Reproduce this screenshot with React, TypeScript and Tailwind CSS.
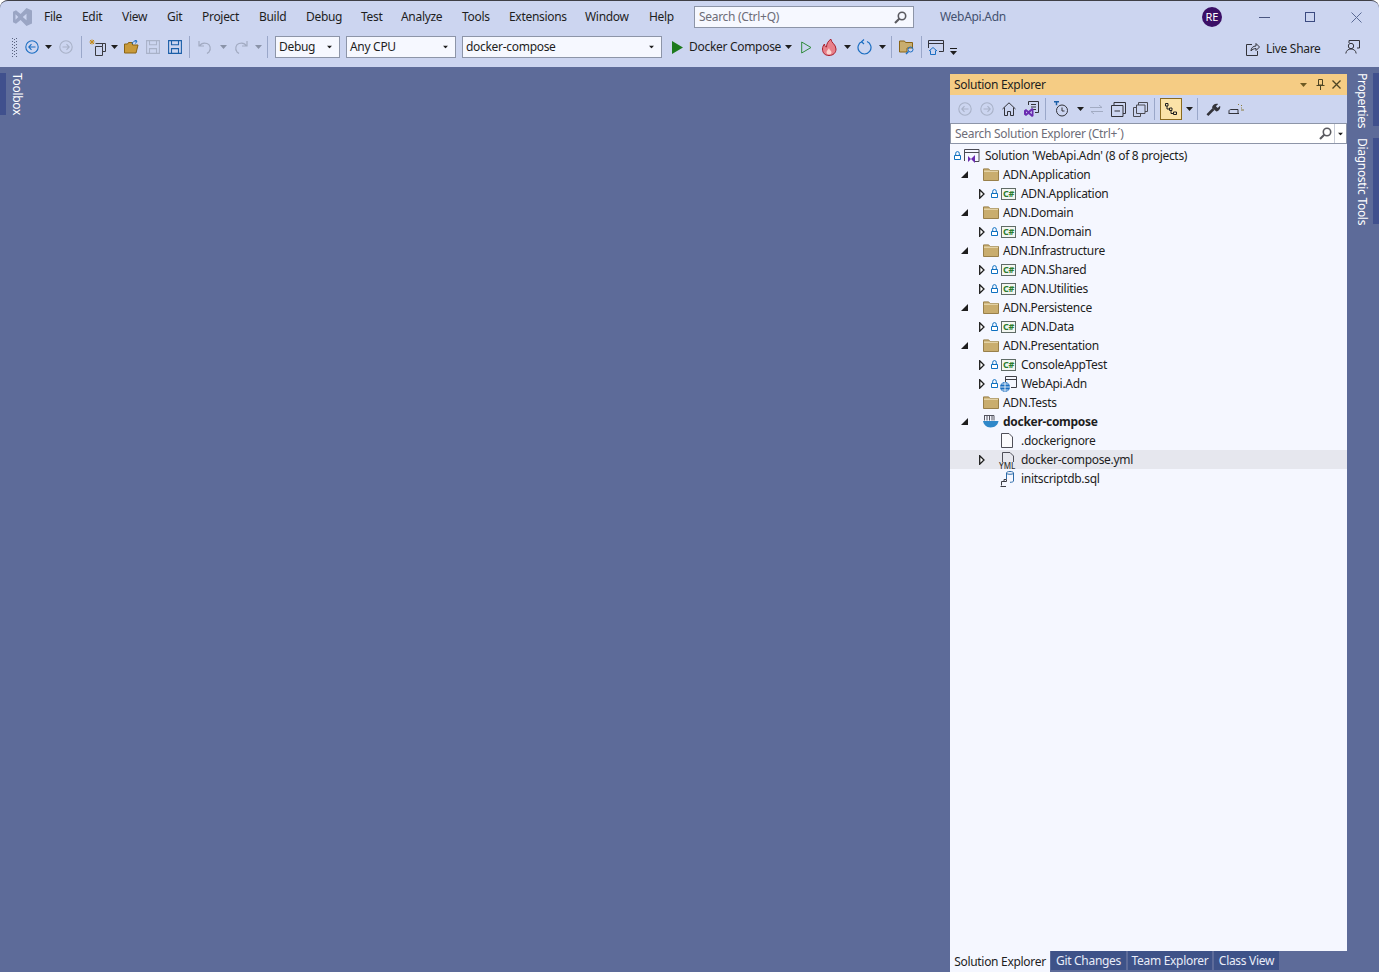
import React from 'react';

const menus = [
  { name: 'File', cls: 'w-[38px]' },
  { name: 'Edit', cls: 'w-[40px]' },
  { name: 'View', cls: 'w-[45px]' },
  { name: 'Git', cls: 'w-[35px]' },
  { name: 'Project', cls: 'w-[57px]' },
  { name: 'Build', cls: 'w-[47px]' },
  { name: 'Debug', cls: 'w-[55px]' },
  { name: 'Test', cls: 'w-[40px]' },
  { name: 'Analyze', cls: 'w-[61px]' },
  { name: 'Tools', cls: 'w-[47px]' },
  { name: 'Extensions', cls: 'w-[76px]' },
  { name: 'Window', cls: 'w-[64px]' },
  { name: 'Help', cls: 'w-[45px]' },
];

function Caret({ className = '', color = '#1e1e1e' }: { className?: string; color?: string }) {
  return (
    <svg width="7" height="4" viewBox="0 0 7 4" className={'shrink-0 ' + className}>
      <path d="M0 0h7L3.5 4z" fill={color} />
    </svg>
  );
}

function Sep({ className = '' }: { className?: string }) {
  return <div className={'w-px h-[22px] bg-[#9aa7c9] shrink-0 ' + className} />;
}

function Grip() {
  const dots = [0, 1, 2, 3, 4, 5, 6];
  return (
    <svg width="5" height="19" viewBox="0 0 5 19" className="shrink-0">
      {dots.map((d) => (
        <g key={d} fill="#59637f">
          <rect x="0" y={d * 3} width="1" height="1" />
          <rect x="2" y={d * 3 + 1} width="1" height="1" />
          <rect x="4" y={d * 3} width="1" height="1" />
        </g>
      ))}
    </svg>
  );
}

function CircleArrow({ dir, color, className = '' }: { dir: 'l' | 'r'; color: string; className?: string }) {
  return (
    <svg width="14" height="14" viewBox="0 0 14 14" fill="none" stroke={color} className={'shrink-0 ' + className}>
      <circle cx="7" cy="7" r="6.2" strokeWidth="1.1" />
      {dir === 'l' ? <path d="M10.5 7H4M6.5 4.2 3.8 7l2.7 2.8" strokeWidth="1.1" /> : <path d="M3.5 7H10M7.5 4.2 10.2 7l-2.7 2.8" strokeWidth="1.1" />}
    </svg>
  );
}

function SaveIcon({ color, className = '' }: { color: string; className?: string }) {
  return (
    <svg width="14" height="14" viewBox="0 0 14 14" fill="none" stroke={color} strokeWidth="1.1" className={'shrink-0 ' + className}>
      <path d="M.6.6h12.8v12.8H.6z" />
      <path d="M3.5.6v4.2h7V.6M3.5 13.4V8.6h7v4.8" />
    </svg>
  );
}

function Combo({ label, className }: { label: string; className: string }) {
  return (
    <div className={'h-[22px] bg-[#f6f8ff] border border-[#8d95a8] flex items-center justify-between pl-[3px] pr-[6px] shrink-0 ' + className}>
      <span>{label}</span>
      <Caret className="scale-75" />
    </div>
  );
}

function Lock() {
  return (
    <svg width="7" height="9" viewBox="0 0 7 9" fill="none" className="shrink-0">
      <path d="M1.7 4V2.4a1.8 1.8 0 0 1 3.6 0V4" stroke="#0e70c0" />
      <path d="M.5 4.500h6v4h-6z" stroke="#0e70c0" fill="#fff" />
    </svg>
  );
}

function Tri({ open }: { open?: boolean }) {
  return open ? (
    <svg width="7" height="7" viewBox="0 0 7 7" className="shrink-0">
      <path d="M7 0v7H0z" fill="#1e1e1e" />
    </svg>
  ) : (
    <svg width="6" height="10" viewBox="0 0 6 10" fill="none" className="shrink-0">
      <path d="M.7.8 5 5 .7 9.2z" stroke="#1e1e1e" strokeWidth="1.300" fill="#fff" />
    </svg>
  );
}

function Folder() {
  return (
    <svg width="16" height="13" viewBox="0 0 16 13" className="shrink-0">
      <path d="M.5 12.500V.9h5.200l1.300 1.700h8.500v9.900z" fill="#c9ad6e" stroke="#99804a" />
      <path d="M1 3.200h14" stroke="#f1e4c0" />
    </svg>
  );
}

function CsProj() {
  return (
    <div className="w-[15px] h-[12px] border border-[#5f6b66] bg-[#f3f6f1] flex items-center justify-center shrink-0 font-bold text-[9px] leading-none text-[#2a7d2e] tracking-[-0.3px]">
      C#
    </div>
  );
}

function VsLogo({ size, color }: { size: number; color: string }) {
  return (
    <svg width={size} height={size} viewBox="0 0 20 20" className="shrink-0">
      <path d="M14.500 1 20 3.400v13.200L14.500 19 8.600 13 4 16.700 1 15.300V4.700L4 3.300 8.600 7zM3.500 7.300v5.400L6.300 10zM10.800 10l3.700 3.200V6.800z" fill={color} fillRule="evenodd" />
    </svg>
  );
}

function WebIcon() {
  return (
    <svg width="18" height="16" viewBox="0 0 18 16" fill="none" className="shrink-0 -ml-[1px]">
      <path d="M5.500 6V.5h11v11H11M5.500 3.500h11" stroke="#3f3f46" />
      <circle cx="5" cy="11" r="5" fill="#1b6ec2" />
      <path d="M0 11h10M5 6v10M1.500 8h7M1.500 14h7" stroke="#fff" strokeWidth=".8" />
    </svg>
  );
}

function DockerIcon() {
  return (
    <svg width="16" height="13" viewBox="0 0 16 13" fill="none" className="shrink-0">
      <path d="M1 .5h10M1.500 .5v5M4 .5v5M6.500 .5v5M9 .5v5M11 .5v5" stroke="#55555f" />
      <path d="M0 6h15.500c-.5 3.600-3.400 6.500-8 6.500C3 12.500.7 9.500 0 6z" fill="#2f88c9" />
    </svg>
  );
}

function FileIcon() {
  return (
    <svg width="12" height="15" viewBox="0 0 12 15" fill="none" className="shrink-0">
      <path d="M.5.5h7.500l3.500 3.500v10.500H.5z" stroke="#4f4f58" fill="#fbfbfd" />
    </svg>
  );
}

function YmlIcon() {
  return (
    <div className="relative w-[15px] h-[16px] shrink-0">
      <svg width="12" height="11" viewBox="0 0 12 11" fill="none" className="ml-[1px]">
        <path d="M.5 10V.5h7.500L11.500 4v6" stroke="#4f4f58" />
      </svg>
      <span className="absolute left-[-2px] top-[10px] font-medium text-[8px] leading-[8px] tracking-normal text-[#333]">YML</span>
    </div>
  );
}

function SqlIcon() {
  return (
    <svg width="16" height="16" viewBox="0 0 16 16" fill="none" className="shrink-0 -ml-[1px]">
      <path d="M6.500 8V2C6.500 1 8 .5 10 .5s3.500.5 3.500 1.500v8c0 .8-1.500 1.300-3.500 1.300" stroke="#2b6aa8" />
      <path d="M6.500 2.500c1 1 6 1 7 0" stroke="#2b6aa8" />
      <path d="M1.500 14.500V10.500h5V8.500M4 10.500V8.500h2.500M.5 15.500h5.500" stroke="#3c3c44" />
    </svg>
  );
}

type Row = { icon: React.ReactNode; label: string; level: 1 | 2; tri?: 'open' | 'closed'; lock?: boolean; bold?: boolean; selected?: boolean };

const rows: Row[] = [
  { icon: <Folder />, label: 'ADN.Application', level: 1, tri: 'open' },
  { icon: <CsProj />, label: 'ADN.Application', level: 2, tri: 'closed', lock: true },
  { icon: <Folder />, label: 'ADN.Domain', level: 1, tri: 'open' },
  { icon: <CsProj />, label: 'ADN.Domain', level: 2, tri: 'closed', lock: true },
  { icon: <Folder />, label: 'ADN.Infrastructure', level: 1, tri: 'open' },
  { icon: <CsProj />, label: 'ADN.Shared', level: 2, tri: 'closed', lock: true },
  { icon: <CsProj />, label: 'ADN.Utilities', level: 2, tri: 'closed', lock: true },
  { icon: <Folder />, label: 'ADN.Persistence', level: 1, tri: 'open' },
  { icon: <CsProj />, label: 'ADN.Data', level: 2, tri: 'closed', lock: true },
  { icon: <Folder />, label: 'ADN.Presentation', level: 1, tri: 'open' },
  { icon: <CsProj />, label: 'ConsoleAppTest', level: 2, tri: 'closed', lock: true },
  { icon: <WebIcon />, label: 'WebApi.Adn', level: 2, tri: 'closed', lock: true },
  { icon: <Folder />, label: 'ADN.Tests', level: 1 },
  { icon: <DockerIcon />, label: 'docker-compose', level: 1, tri: 'open', bold: true },
  { icon: <FileIcon />, label: '.dockerignore', level: 2 },
  { icon: <YmlIcon />, label: 'docker-compose.yml', level: 2, tri: 'closed', selected: true },
  { icon: <SqlIcon />, label: 'initscriptdb.sql', level: 2 },
];

function TreeRow({ row }: { row: Row }) {
  return (
    <div className={'h-[19px] flex items-center ' + (row.selected ? 'bg-[#e6e7ee]' : '')}>
      {row.level === 1 ? (
        <>
          <div className="w-[33px] pl-[11px] flex items-center shrink-0">{row.tri === 'open' && <Tri open />}</div>
          <div className="w-[20px] flex justify-start shrink-0">{row.icon}</div>
        </>
      ) : (
        <>
          <div className="w-[41px] pl-[29px] shrink-0 flex items-center">{row.tri === 'closed' && <Tri />}</div>
          <div className="w-[30px] flex items-center shrink-0">
            <div className="w-[10px] shrink-0">{row.lock && <Lock />}</div>
            {row.icon}
          </div>
        </>
      )}
      <span className={row.bold ? 'font-bold text-[#1e1e1e]' : ''}>{row.label}</span>
    </div>
  );
}

function BottomTab({ label, className }: { label: string; className: string }) {
  return <div className={'h-[19px] bg-[#3e5288] text-[#e8ecf8] flex items-center justify-center shrink-0 ' + className}>{label}</div>;
}

export default function App() {
  return (
    <div className="w-[1379px] h-[972px] overflow-hidden flex flex-col bg-[#5d6b99] text-[12px] text-[#1e1e1e] font-['Noto_Sans','Open_Sans',sans-serif] tracking-[-0.3px] rounded-t-[8px] border-t border-[#3f3f46]">
      {/* Title bar */}
      <div className="h-[32px] bg-[#ccd5f0] flex items-center shrink-0">
        <div className="w-[44px] pl-[12px] shrink-0">
          <VsLogo size={20} color="#9aa5c4" />
        </div>
        {menus.map((m) => (
          <div key={m.name} className={'shrink-0 ' + m.cls}>
            {m.name}
          </div>
        ))}
        <div className="w-[220px] h-[22px] bg-[#f6f8ff] border border-[#8d95a8] flex items-center justify-between pl-[4px] pr-[6px] text-[#6d6d78] shrink-0">
          <span>Search (Ctrl+Q)</span>
          <svg width="13" height="13" viewBox="0 0 13 13" fill="none">
            <circle cx="8" cy="5" r="3.700" stroke="#5a5a60" strokeWidth="1.600" />
            <path d="M5.500 7.500 1 12" stroke="#5a5a60" strokeWidth="2.200" />
          </svg>
        </div>
        <div className="ml-[26px] w-[262px] text-[#44516f] shrink-0">WebApi.Adn</div>
        <div className="w-[20px] h-[20px] rounded-full bg-[#3b0f66] text-white text-[11px] flex items-center justify-center tracking-normal shrink-0">RE</div>
        <div className="ml-[37px] w-[11px] h-px bg-[#4a5680] shrink-0" />
        <div className="ml-[35px] w-[10px] h-[10px] border border-[#3b4a80] shrink-0" />
        <svg width="11" height="11" viewBox="0 0 11 11" className="ml-[36px] shrink-0" fill="none" stroke="#5a6a95">
          <path d="M.5.5l10 10M10.500.5l-10 10" />
        </svg>
      </div>

      {/* Toolbar */}
      <div className="h-[34px] bg-[#ccd5f0] flex items-center shrink-0 pl-[12px] pb-[6px]">
        <Grip />
        <CircleArrow dir="l" color="#1b6ec2" className="ml-[8px]" />
        <Caret className="ml-[6px]" />
        <CircleArrow dir="r" color="#a9b2c8" className="ml-[7px]" />
        <Sep className="ml-[8px]" />
        <svg width="17" height="17" viewBox="0 0 17 17" fill="none" className="ml-[7px] shrink-0">
          <path d="M3 .500v5M.5 3h5M1 1l4 4M5 1 1 5" stroke="#c48a1a" />
          <path d="M6.500 4.500h7v3M10.500 4.500h6v8h-3" stroke="#3a3a40" />
          <path d="M6.500 7.500h7v9h-7z" fill="#ccd5f0" stroke="#3a3a40" />
        </svg>
        <Caret className="ml-[5px]" />
        <svg width="15" height="14" viewBox="0 0 15 14" className="ml-[6px] shrink-0" fill="none">
          <path d="M.5 13V4h3l1-1.500h4V5H14l-2 8z" fill="#c99a3a" stroke="#8a6414" />
          <path d="M8 4c.5-2 2-3 4-3M10.500 0l2.500 1-1.500 2.500" stroke="#1b6ec2" />
        </svg>
        <SaveIcon color="#a9b2c8" className="ml-[7px]" />
        <SaveIcon color="#1b5fa8" className="ml-[8px]" />
        <Sep className="ml-[7px]" />
        <svg width="14" height="14" viewBox="0 0 14 14" fill="none" stroke="#a2abc2" className="ml-[8px] shrink-0" strokeWidth="1.200">
          <path d="M1 1v5h5M1.500 6C3 3.500 6 2.500 9 3.500s4.500 5 2 8.500l-2 1.500" />
        </svg>
        <Caret color="#8a93a8" className="ml-[8px]" />
        <svg width="14" height="14" viewBox="0 0 14 14" fill="none" stroke="#a2abc2" className="ml-[7px] shrink-0" strokeWidth="1.200">
          <path d="M13 1v5H8M12.500 6C11 3.500 8 2.500 5 3.500s-4.500 5-2 8.500l2 1.500" />
        </svg>
        <Caret color="#8a93a8" className="ml-[7px]" />
        <Sep className="ml-[5px]" />
        <Combo label="Debug" className="ml-[7px] w-[65px]" />
        <Combo label="Any CPU" className="ml-[6px] w-[110px]" />
        <Combo label="docker-compose" className="ml-[6px] w-[200px]" />
        <svg width="11" height="13" viewBox="0 0 11 13" className="ml-[10px] shrink-0">
          <path d="M0 0l11 6.500L0 13z" fill="#1d7a1d" />
        </svg>
        <span className="ml-[6px] w-[96px] shrink-0">Docker Compose</span>
        <Caret />
        <svg width="11" height="13" viewBox="0 0 11 13" fill="none" className="ml-[9px] shrink-0">
          <path d="M.7 1l9.300 5.500L.7 12z" stroke="#2e8b3a" />
        </svg>
        <svg width="15" height="17" viewBox="0 0 15 17" className="ml-[10px] shrink-0">
          <path d="M9 .5c0 3 5 5 5 9.500 0 4-3 6.500-7 6.500s-6.500-2.500-6.500-6.500c0-2 1-4 2-5 0 2 1 3 2 3 0-3 1.500-6 4.500-8z" fill="#e8808a" stroke="#a81f2c" />
          <path d="M7 9c0 2 2.500 2.500 2.500 4.500 0 1.300-1 2-2.500 2s-2.500-.7-2.500-2c0-1.800 1.700-2.700 2.500-4.500z" fill="#fbd5d0" />
        </svg>
        <Caret className="ml-[7px]" />
        <svg width="15" height="16" viewBox="0 0 15 16" fill="none" stroke="#1b6ec2" className="ml-[6px] shrink-0" strokeWidth="1.200">
          <path d="M5 2.500a6.500 6.500 0 1 0 5 0M7 .500 4.500 2.700 7 5" />
        </svg>
        <Caret className="ml-[7px]" />
        <Sep className="ml-[5px]" />
        <svg width="16" height="15" viewBox="0 0 16 15" className="ml-[7px] shrink-0" fill="none">
          <path d="M.5 12V1h5l1 1.500h7V8H8v4z" fill="#c9ad6e" stroke="#8a6414" />
          <circle cx="11.500" cy="9.500" r="2.500" stroke="#1b6ec2" />
          <path d="M9.500 11.500 7 14" stroke="#1b6ec2" strokeWidth="1.500" />
        </svg>
        <Sep className="ml-[6px]" />
        <svg width="16" height="15" viewBox="0 0 16 15" fill="none" className="ml-[6px] shrink-0">
          <path d="M.5 8V.5h15v11H11M.5 3.500h15" stroke="#33333a" />
          <path d="M1 11l4-3.500L9 11M2.500 10.500v4h5v-4" stroke="#1b6ec2" />
        </svg>
        <svg width="7" height="7" viewBox="0 0 7 7" className="ml-[6px] mt-[8px] shrink-0">
          <path d="M0 0h7v1H0zM0 3h7L3.500 7z" fill="#1e1e1e" />
        </svg>
        <svg width="14" height="14" viewBox="0 0 14 14" fill="none" stroke="#33333a" className="ml-[289px] mt-[4px] shrink-0">
          <path d="M6 2.500H.5v11h11V9M5 9c0-3 2-5 5-5V1.500L13.500 5 10 8.500V6.500c-2 0-4 1-5 2.500z" />
        </svg>
        <span className="ml-[6px] w-[79px] shrink-0 mt-[4px]">Live Share</span>
        <svg width="15" height="14" viewBox="0 0 15 14" fill="none" stroke="#33333a" className="shrink-0">
          <path d="M4 3V.5h10.500V8H12" />
          <circle cx="6" cy="6" r="2.700" />
          <path d="M.8 13.500c.4-3 2.500-4.500 5.200-4.500s4.800 1.500 5.200 4.500" />
        </svg>
      </div>

      {/* Main area */}
      <div className="flex-1 flex min-h-0">
        <div className="w-[24px] shrink-0 pt-[6px] flex items-start">
          <div className="h-[42px] w-[6px] bg-[#40508d] shrink-0" />
          <div className="[writing-mode:vertical-rl] ml-[4px] text-white leading-[14px]">Toolbox</div>
        </div>
        <div className="flex-1" />

        {/* Solution Explorer */}
        <div className="w-[397px] shrink-0 mt-[7px] flex flex-col">
          <div className="h-[21px] bg-[#f5cc84] flex items-center pl-[4px] shrink-0">
            <span className="flex-1">Solution Explorer</span>
            <Caret color="#6e5a23" className="mr-[9px]" />
            <svg width="9" height="11" viewBox="0 0 9 11" fill="none" stroke="#4d4423" className="mr-[7px] shrink-0">
              <path d="M2.500.5h4v5.500h-4zM.5 6.500h8M4.500 6.500V11" />
            </svg>
            <svg width="9" height="9" viewBox="0 0 9 9" fill="none" stroke="#4d4423" strokeWidth="1.300" className="mr-[6px] shrink-0">
              <path d="M.5.500l8 8M8.500.500l-8 8" />
            </svg>
          </div>

          <div className="h-[28px] bg-[#ccd5f0] flex items-center shrink-0">
            <CircleArrow dir="l" color="#a9b2c8" className="ml-[8px]" />
            <CircleArrow dir="r" color="#a9b2c8" className="ml-[8px]" />
            <svg width="14" height="14" viewBox="0 0 14 14" fill="none" stroke="#33333a" className="ml-[8px] shrink-0">
              <path d="M.5 7 7 .8 13.500 7M2.500 5.500v8h3v-4h3v4h3v-8" />
            </svg>
            <svg width="16" height="16" viewBox="0 0 16 16" fill="none" className="ml-[7px] shrink-0">
              <path d="M5.500 4V.5h10v11H12M8 3.500h5M8 6h5M10 8.500h3" stroke="#33333a" />
              <path d="M1 9.500 3 8l2.500 2L9 7l1.500 1v7L9 16l-3.500-3L3 15l-2-1.500z" fill="#6a2bb0" />
              <path d="M3 10.500v2l1.300-1zM8.800 9.800l-1.800 1.700 1.800 1.700z" fill="#ccd5f0" />
            </svg>
            <Sep className="ml-[6px]" />
            <svg width="16" height="16" viewBox="0 0 16 16" fill="none" className="ml-[8px] shrink-0">
              <path d="M0 .800h5M2.500 .800v3.500" stroke="#1b5fa8" strokeWidth="1.500" />
              <circle cx="8" cy="9.500" r="5.500" stroke="#33333a" />
              <path d="M8 6.500v3.500h2.500" stroke="#33333a" />
            </svg>
            <Caret className="ml-[7px]" />
            <svg width="13" height="9" viewBox="0 0 13 9" fill="none" stroke="#a2abc2" className="ml-[6px] shrink-0">
              <path d="M0 2.500h12M9 0l3 2.500M13 6.500H1M4 9 1 6.500" />
            </svg>
            <svg width="15" height="15" viewBox="0 0 15 15" fill="none" stroke="#33333a" className="ml-[8px] shrink-0">
              <path d="M3 3V.5h11.500v11H12" />
              <path d="M.5 3.500h11.500v11H.5zM3.500 9h5.500" />
            </svg>
            <svg width="15" height="15" viewBox="0 0 15 15" fill="none" stroke="#4a4a52" className="ml-[7px] shrink-0">
              <path d="M5.500 3V.5h9v9H12M.5 5.500h3M.5 5.500v9h7v-3" />
              <path d="M3.500 3h8.500v8.500H3.500z" />
            </svg>
            <Sep className="ml-[6px]" />
            <div className="ml-[5px] w-[22px] h-[22px] border border-[#8a6a1f] bg-[#fbe3a8] flex items-center justify-center shrink-0">
              <svg width="14" height="14" viewBox="0 0 14 14" fill="none" stroke="#1e1e1e">
                <path d="M1.500 1.500h2.500v2.500H1.500zM5.500 6h2.500v2.500H5.500zM9.500 10h3v2.500h-3zM3 4v3h2.500M7 8.500V11.500h2.500" />
              </svg>
            </div>
            <Caret className="ml-[4px]" />
            <Sep className="ml-[4px]" />
            <svg width="15" height="15" viewBox="0 0 16 15" className="ml-[8px] shrink-0" fill="none">
              <path d="M1.500 13.500 8 7" stroke="#33333a" strokeWidth="2.800" />
              <path d="M6.500 5.500C6.500 3 9.500.5 13 1.500L10.500 4l2 2L15 3.500c1 3-1.500 6-4 6z" fill="#33333a" />
            </svg>
            <svg width="16" height="10" viewBox="0 0 16 10" fill="none" stroke="#33333a" className="ml-[7px] shrink-0">
              <path d="M.5 9.500h10.500M1 9V7c0-1 1-1.500 2-1.500h7v4" />
              <path d="M10 1l1-1M13 2l1-1M13 6h3M13 4h1" stroke="#8a7a3a" />
            </svg>
          </div>

          <div className="h-[21px] bg-white border border-[#8d95a8] flex items-center shrink-0">
            <span className="flex-1 pl-[4px] text-[#6d6d78]">Search Solution Explorer (Ctrl+´)</span>
            <svg width="13" height="13" viewBox="0 0 13 13" fill="none" className="mr-[2px] shrink-0">
              <circle cx="8" cy="5" r="3.700" stroke="#5a5a60" strokeWidth="1.600" />
              <path d="M5.500 7.500 1 12" stroke="#5a5a60" strokeWidth="2.200" />
            </svg>
            <div className="w-[12px] h-full border-l border-[#c9cdd8] flex items-center justify-center shrink-0">
              <Caret className="scale-75" />
            </div>
          </div>

          <div className="flex-1 bg-[#f5f7ff] pt-[2px] min-h-0">
            <div className="h-[19px] flex items-center">
              <div className="w-[4px] shrink-0" />
              <Lock />
              <svg width="16" height="14" viewBox="0 0 16 14" fill="none" className="ml-[3px] shrink-0">
                <path d="M.5 12V.5h14.500v12H11M.5 3.500h14.500" stroke="#4a4a52" />
                <path d="M4 7l3 3-3 3z M7 10l4-4v8z" fill="#6a2bb0" />
              </svg>
              <span className="ml-[5px]">Solution 'WebApi.Adn' (8 of 8 projects)</span>
            </div>
            {rows.map((row, i) => (
              <TreeRow key={i} row={row} />
            ))}
          </div>

          <div className="h-[21px] flex shrink-0">
            <div className="h-[21px] w-[100px] bg-[#f5f7ff] flex items-center justify-center shrink-0">Solution Explorer</div>
            <BottomTab label="Git Changes" className="ml-px w-[75px]" />
            <BottomTab label="Team Explorer" className="ml-[2px] w-[84px]" />
            <BottomTab label="Class View" className="ml-[2px] w-[65px]" />
          </div>
        </div>

        {/* Right rail */}
        <div className="w-[32px] shrink-0 pt-[6px] flex flex-col gap-[12px]">
          <div className="h-[53px] flex justify-end">
            <div className="[writing-mode:vertical-rl] text-white leading-[14px] mr-[4px] whitespace-nowrap">Properties</div>
            <div className="w-[6px] h-full bg-[#40508d]" />
          </div>
          <div className="h-[86px] flex justify-end">
            <div className="[writing-mode:vertical-rl] text-white leading-[14px] mr-[4px] whitespace-nowrap">Diagnostic Tools</div>
            <div className="w-[6px] h-full bg-[#40508d]" />
          </div>
        </div>
      </div>
    </div>
  );
}
